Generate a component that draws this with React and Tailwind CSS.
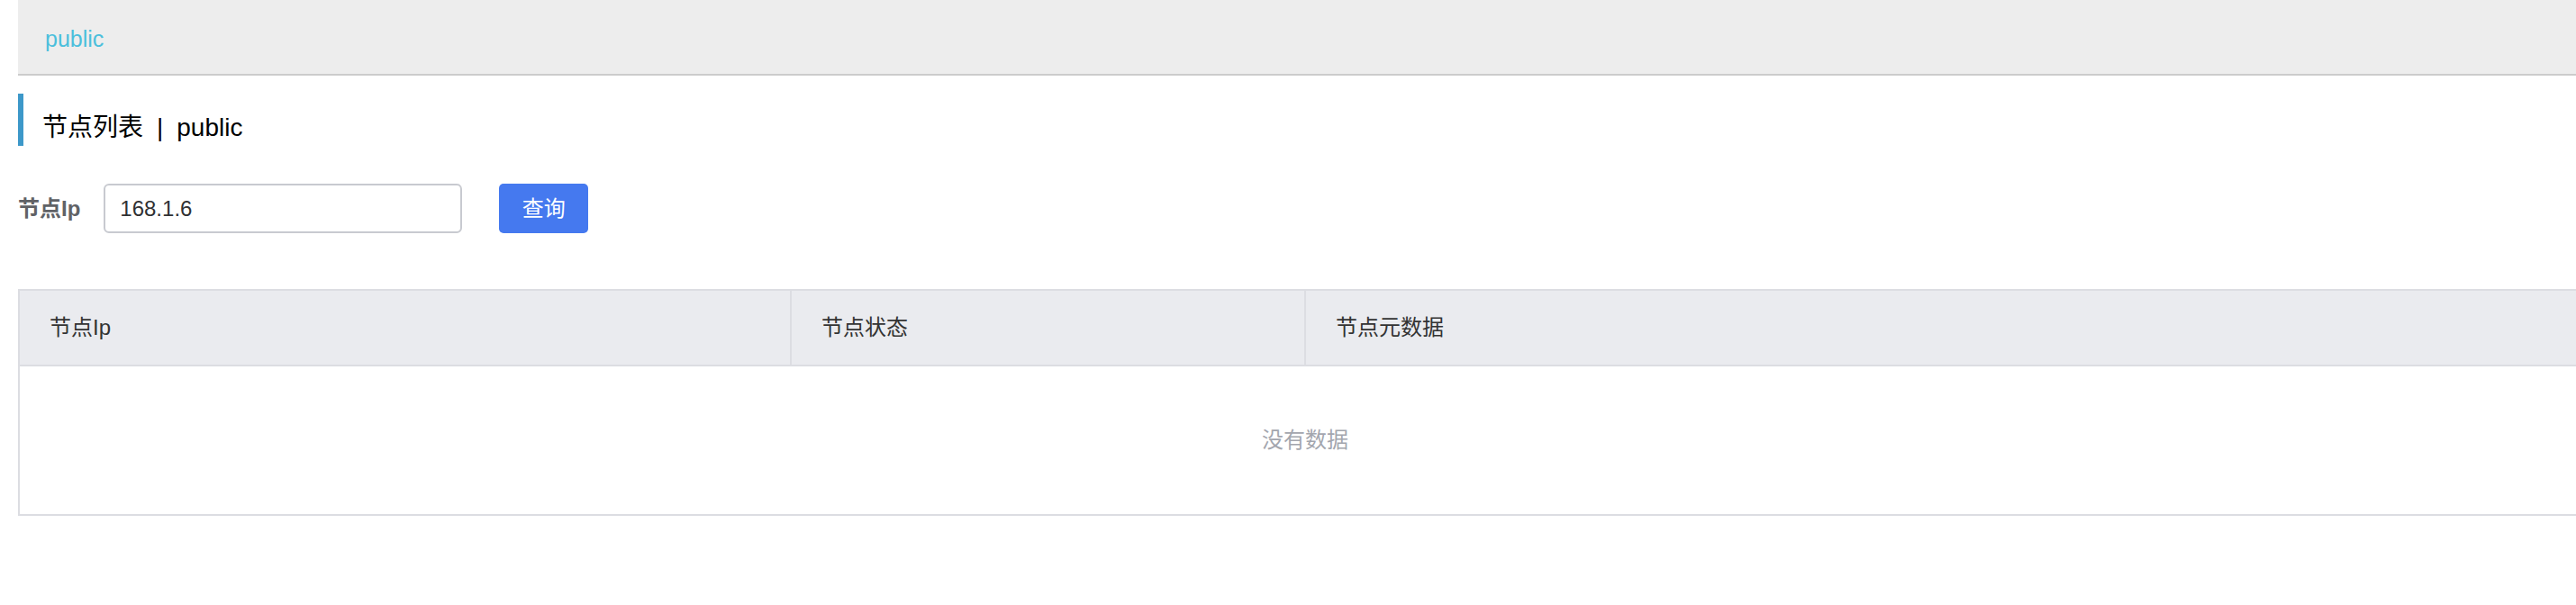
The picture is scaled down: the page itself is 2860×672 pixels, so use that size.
export default function App() {
  return (
    <div className="min-h-screen overflow-hidden bg-white pl-[20px] font-['Liberation_Sans','Noto_Sans_CJK_SC',sans-serif]">
      {/* 顶部面包屑 */}
      <div className="flex h-[84px] items-center border-b-2 border-[#cccccc] bg-[#ededed] pl-[30px] pt-[6px]">
        <span className="text-[25px] text-[#4bbfdc]">public</span>
      </div>

      {/* 标题 */}
      <div className="mt-[20px] flex h-[58px] items-center border-l-[6px] border-[#3d98c9] pl-[21px] pt-[18px]">
        <span className="text-[28px] text-black">
          节点列表<span className="px-[15px]">|</span>public
        </span>
      </div>

      {/* 查询条件 */}
      <div className="mt-[42px] flex items-center">
        <label className="text-[24px] font-bold text-[#606266]">节点Ip</label>
        <input
          defaultValue="168.1.6"
          className="ml-[26px] h-[55px] w-[398px] rounded-[6px] border-2 border-[#c8cad0] px-[16px] text-[24px] text-[#303133] outline-none"
        />
        <button className="ml-[41px] h-[55px] w-[99px] rounded-[5px] bg-[#4579ef] text-[24px] text-white">
          查询
        </button>
      </div>

      {/* 表格 */}
      <div className="mt-[62px] border-2 border-r-0 border-[#dcdde2]">
        <div className="flex h-[84px] items-center border-b-2 border-[#dcdde2] bg-[#eaebef] text-[24px] text-[#333333]">
          <div className="flex h-full w-[857px] items-center border-r-2 border-[#dcdde2] pl-[33px]">节点Ip</div>
          <div className="flex h-full w-[571px] items-center border-r-2 border-[#dcdde2] pl-[33px]">节点状态</div>
          <div className="flex h-full flex-1 items-center pl-[33px]">节点元数据</div>
        </div>
        <div className="flex h-[164px] items-center pl-[1379px] text-[24px] text-[#a3a6ae]">
          没有数据
        </div>
      </div>
    </div>
  );
}
